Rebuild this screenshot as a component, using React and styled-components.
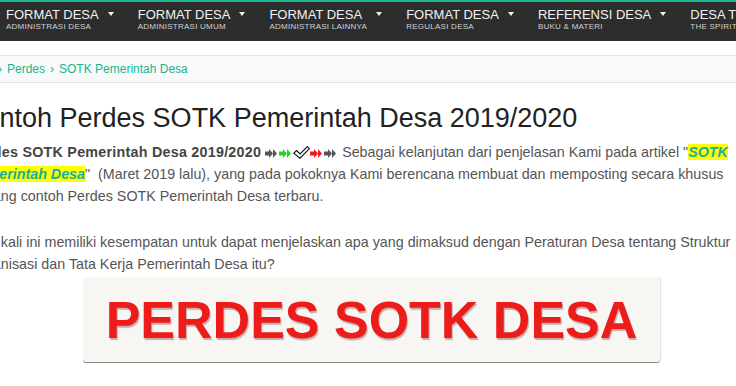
import React from "react";
import styled, { createGlobalStyle } from "styled-components";

const GlobalStyle = createGlobalStyle`
  html, body {
    margin: 0;
    padding: 0;
    background: #fff;
    overflow: hidden;
  }
  body {
    width: 736px;
    height: 386px;
    font-family: "Liberation Sans", Arial, sans-serif;
  }
`;

const menu = [
  { title: "FORMAT DESA", sub: "ADMINISTRASI DESA" },
  { title: "FORMAT DESA", sub: "ADMINISTRASI UMUM" },
  { title: "FORMAT DESA", sub: "ADMINISTRASI LAINNYA" },
  { title: "FORMAT DESA", sub: "REGULASI DESA" },
  { title: "REFERENSI DESA", sub: "BUKU & MATERI" },
  { title: "DESA TEMATIK", sub: "THE SPIRIT OF VILLAGE" },
];

const Arrow = ({ color }) => (
  <ArrowSvg width="12" height="9" viewBox="0 0 12 9">
    <rect x="0" y="2.5" width="4" height="4" fill={color} />
    <polygon points="4,0 8,4.5 4,9" fill={color} />
    <polygon points="8,0 12,4.5 8,9" fill={color} />
  </ArrowSvg>
);

const Check = () => (
  <CheckSvg width="17" height="13" viewBox="0 0 17 13">
    <polygon
      points="0.8,7.2 3.6,4.6 7,8 14.4,0.6 16.4,2.6 7,12.2"
      fill="#fff"
      stroke="#111"
      strokeWidth="1.1"
    />
  </CheckSvg>
);

const App = () => {
  return (
    <>
      <GlobalStyle />
      <Nav>
        {menu.map((m, i) => (
          <NavItem key={i}>
            <NavText>
              <NavTitle>{m.title}</NavTitle>
              <NavSub>{m.sub}</NavSub>
            </NavText>
            <Caret />
          </NavItem>
        ))}
      </Nav>

      <Crumbs>
        <Trail>
          <Sep>›</Sep>Perdes<Sep>›</Sep>SOTK Pemerintah Desa
        </Trail>
      </Crumbs>

      <Article>
        <Title>Contoh Perdes SOTK Pemerintah Desa 2019/2020</Title>
        <Para>
          <Strong>Perdes SOTK Pemerintah Desa 2019/2020</Strong>{" "}
          <Arrow color="#555" />
          <Arrow color="#11e011" />
          <Check />
          <Arrow color="#ee1b1b" />
          <Arrow color="#555" /> Sebagai kelanjutan dari penjelasan Kami pada
          artikel "<Mark>SOTK Pemerintah Desa</Mark>"&nbsp; (Maret 2019 lalu),
          yang pada pokoknya Kami berencana membuat dan memposting secara
          khusus tentang contoh Perdes SOTK Pemerintah Desa terbaru.
        </Para>
        <Para $tight>
          Bisa kali ini memiliki kesempatan untuk dapat menjelaskan apa yang
          dimaksud dengan Peraturan Desa tentang Struktur Organisasi dan Tata
          Kerja Pemerintah Desa itu?
        </Para>
        <Banner>PERDES SOTK DESA</Banner>
      </Article>
    </>
  );
};

const Nav = styled.nav`
  display: flex;
  flex-wrap: nowrap;
  overflow: hidden;
  white-space: nowrap;
  background: #2d2d2d;
  border-top: 2px solid #1db592;
  padding: 5px 0 9px;
`;

const NavItem = styled.div`
  display: flex;
  align-items: flex-start;
  flex-shrink: 0;
  padding: 0 18px 0 6px;
`;

const NavText = styled.div`
  display: flex;
  flex-direction: column;
`;

const NavTitle = styled.span`
  font-size: 13px;
  line-height: 15px;
  color: #f2f2f2;
`;

const NavSub = styled.span`
  font-size: 8px;
  line-height: 10px;
  letter-spacing: 0.25px;
  color: #d2d2d2;
`;

const Caret = styled.span`
  width: 0;
  height: 0;
  margin: 5px 0 0 9px;
  border-left: 3.5px solid transparent;
  border-right: 3.5px solid transparent;
  border-top: 4px solid #f2f2f2;
`;

const Crumbs = styled.div`
  margin-top: 14px;
  height: 26px;
  line-height: 26px;
  background: #f9f9f9;
  border-top: 1px solid #e4e4e4;
  border-bottom: 1px solid #e4e4e4;
  font-size: 12px;
  color: #1ab491;
  white-space: nowrap;
  overflow: hidden;
`;

const Trail = styled.span`
  display: inline-block;
  margin-left: -7px;
`;

const Sep = styled.span`
  margin: 0 5px;
`;

const Article = styled.main`
  margin-left: -31px;
  width: 805px;
`;

const Title = styled.h1`
  margin: 19px 0 0 -4px;
  font-size: 27px;
  font-weight: normal;
  line-height: 32px;
  color: #222;
  white-space: nowrap;
`;

const Para = styled.p`
  margin: 7px 0 ${(p) => (p.$tight ? "2px" : "24px")};
  font-size: 14.3px;
  line-height: 22px;
  color: #555;
`;

const Strong = styled.strong`
  color: #444;
  letter-spacing: 0.25px;
`;

const Mark = styled.span`
  background: #ffff00;
  color: #13b09d;
  font-weight: bold;
  font-style: italic;
`;

const ArrowSvg = styled.svg`
  vertical-align: -1px;
  margin-right: 2px;
`;

const CheckSvg = styled.svg`
  vertical-align: -2px;
`;

const Banner = styled.div`
  display: flex;
  align-items: center;
  justify-content: center;
  width: 577px;
  height: 85px;
  margin: 0 auto;
  background: #f7f6f2;
  border-radius: 3px;
  box-shadow: 0 1px 0 #8a8a8a, 1px 0 0 #e2e2e2;
  font-size: 52px;
  font-weight: bold;
  color: #ee1b1b;
  text-shadow: 1px 2px 1px rgba(80, 0, 0, 0.3);
`;

export default App;
